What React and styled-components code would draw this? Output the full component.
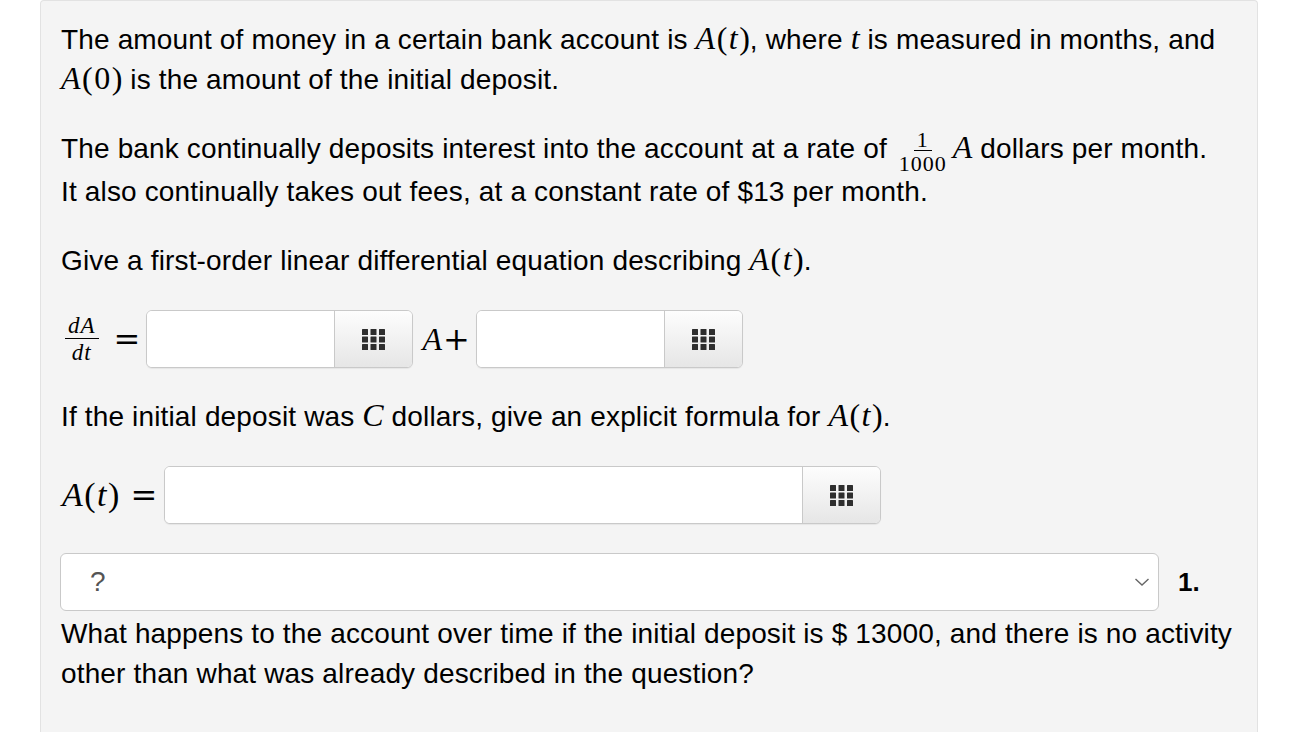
import React from "react";
import styled, { createGlobalStyle } from "styled-components";

const Global = createGlobalStyle`
  html, body { margin: 0; padding: 0; background: #fff; }
  body { font-family: "Liberation Sans", Arial, sans-serif; color: #000; }
`;

const Page = styled.div`
  padding-left: 40px;
  width: 1218px;
`;

const Panel = styled.div`
  box-sizing: border-box;
  width: 1218px;
  min-height: 760px;
  background: #f4f4f4;
  border: 1px solid #e2e2e2;
  border-bottom: none;
  border-radius: 4px 4px 0 0;
  padding: 19px 20px 40px 20px;
  display: flex;
  flex-direction: column;
  gap: 29px;
`;

const P = styled.div`
  margin: 0;
  font-size: 28px;
  line-height: 40px;
  letter-spacing: 0.15px;
  white-space: nowrap;
`;

const Line = styled.div`
  height: 40px;
  margin-top: ${(p) => p.$mt || 0}px;
`;

const M = styled.span`
  font-family: "Liberation Serif", "Times New Roman", serif;
  font-style: ${(p) => (p.$up ? "normal" : "italic")};
  font-size: ${(p) => p.$size || 32}px;
  line-height: 1;
  letter-spacing: ${(p) => p.$ls ?? 1.5}px;
  margin-left: ${(p) => p.$ml || 0}px;
`;

const Frac = styled.span`
  display: inline-flex;
  flex-direction: column;
  align-items: center;
  vertical-align: ${(p) => p.$va || "0"};
  font-family: "Liberation Serif", "Times New Roman", serif;
  font-style: ${(p) => (p.$italic ? "italic" : "normal")};
  font-size: ${(p) => p.$size || 20}px;
  letter-spacing: ${(p) => p.$ls || 0}px;
  line-height: 1;
  margin: ${(p) => p.$mv || 0}px ${(p) => p.$mr || 4}px ${(p) => p.$mv || 0}px ${(p) => p.$ml || 4}px;
`;

const Num = styled.span`
  line-height: ${(p) => p.$lh || 1};
  padding: 0 3px ${(p) => p.$pb ?? 1}px;
  border-bottom: 1px solid #000;
`;

const Den = styled.span`
  padding: 2px 3px 0;
`;

const Row = styled.div`
  display: flex;
  align-items: center;
  height: 58px;
`;

const Op = styled.span`
  font-family: "DejaVu Serif", "Liberation Serif", serif;
  font-size: ${(p) => p.$size || 32}px;
  margin: ${(p) => p.$m || "0 6px"};
`;

const InputGroup = styled.div`
  box-sizing: border-box;
  display: flex;
  flex: none;
  width: ${(p) => p.$w}px;
  height: 58px;
  border: 1px solid #c9c9c9;
  border-radius: 6px;
  background: #fff;
  overflow: hidden;
  box-shadow: 0 1px 1px rgba(0,0,0,0.06);
`;

const Field = styled.div`
  flex: 1;
  background: #fff;
`;

const PadButton = styled.div`
  width: 77px;
  border-left: 1px solid #c9c9c9;
  background: linear-gradient(#fdfdfd, #e6e6e6);
  display: flex;
  align-items: center;
  justify-content: center;
`;

const GridIcon = () => (
  <svg width="23" height="21" viewBox="0 0 23 21">
    {[0, 1, 2].map((r) =>
      [0, 1, 2].map((c) => (
        <rect key={`${r}-${c}`} x={c * 8.5} y={r * 7.5} width="6" height="6" fill="#2e2e2e" rx="0.5" />
      ))
    )}
  </svg>
);

const SelectRow = styled.div`
  display: flex;
  align-items: center;
`;

const SelectBox = styled.div`
  box-sizing: border-box;
  width: 1099px;
  height: 58px;
  margin-left: -1px;
  border: 1px solid #c9c9c9;
  border-radius: 6px;
  background: #fff;
  display: flex;
  align-items: center;
  justify-content: space-between;
  padding: 0 8px 0 29px;
  font-size: 28px;
  color: #555;
`;

const Label = styled.span`
  font-weight: bold;
  font-size: 26px;
  margin-left: 19px;
`;

const QuestionBlock = styled.div`
  display: flex;
  flex-direction: column;
  gap: 3px;
`;

const Chevron = () => (
  <svg width="16" height="10" viewBox="0 0 16 10">
    <path d="M1.5 2 L8 8 L14.5 2" fill="none" stroke="#666" strokeWidth="1.4" />
  </svg>
);

const AofT = ({ size, ml }) => (
  <>
    <M $size={size} $ml={ml}>A</M>
    <M $up $size={size}>(</M>
    <M $size={size}>t</M>
    <M $up $size={size} $ls={0}>)</M>
  </>
);

export default function App() {
  return (
    <>
      <Global />
      <Page>
        <Panel>
          <P>
            <Line>
              The amount of money in a certain bank account is <AofT />, where <M $ls={0}>t</M> is measured in months, and
            </Line>
            <Line>
              <M>A</M><M $up>(0</M><M $up $ls={0}>)</M> is the amount of the initial deposit.
            </Line>
          </P>
          <P>
            <Line>
              The bank continually deposits interest into the account at a rate of
              <Frac $va="11px" $mv={-20} $size={22} $ls={1} $ml={9} $mr={3}>
                <Num $lh={0.85} $pb={0}>1</Num>
                <Den>1000</Den>
              </Frac>
              <M $ls={0}>A</M> dollars per month.
            </Line>
            <Line $mt={3}>
              It also continually takes out fees, at a constant rate of $13 per month.
            </Line>
          </P>
          <P>
            <Line>
              Give a first-order linear differential equation describing <AofT />.
            </Line>
          </P>
          <Row>
            <Frac $italic $size={23} $ls={1} $ml={0} $mr={0}>
              <Num>dA</Num>
              <Den>dt</Den>
            </Frac>
            <Op $m="0 6px 0 11px">=</Op>
            <InputGroup $w={267}>
              <Field />
              <PadButton><GridIcon /></PadButton>
            </InputGroup>
            <M $ml={9} $ls={0}>A</M>
            <Op $m="0 6px 0 1px">+</Op>
            <InputGroup $w={267}>
              <Field />
              <PadButton><GridIcon /></PadButton>
            </InputGroup>
          </Row>
          <P>
            <Line>
              If the initial deposit was <M $ls={0}>C</M> dollars, give an explicit formula for <AofT />.
            </Line>
          </P>
          <Row>
            <AofT size={34} ml={1} />
            <Op $m="0 7px 0 11px">=</Op>
            <InputGroup $w={717}>
              <Field />
              <PadButton><GridIcon /></PadButton>
            </InputGroup>
          </Row>
          <QuestionBlock>
            <SelectRow>
              <SelectBox>
                <span>?</span>
                <Chevron />
              </SelectBox>
              <Label>1.</Label>
            </SelectRow>
            <P>
              <Line>
                What happens to the account over time if the initial deposit is $ 13000, and there is no activity
              </Line>
              <Line>other than what was already described in the question?</Line>
            </P>
          </QuestionBlock>
        </Panel>
      </Page>
    </>
  );
}
